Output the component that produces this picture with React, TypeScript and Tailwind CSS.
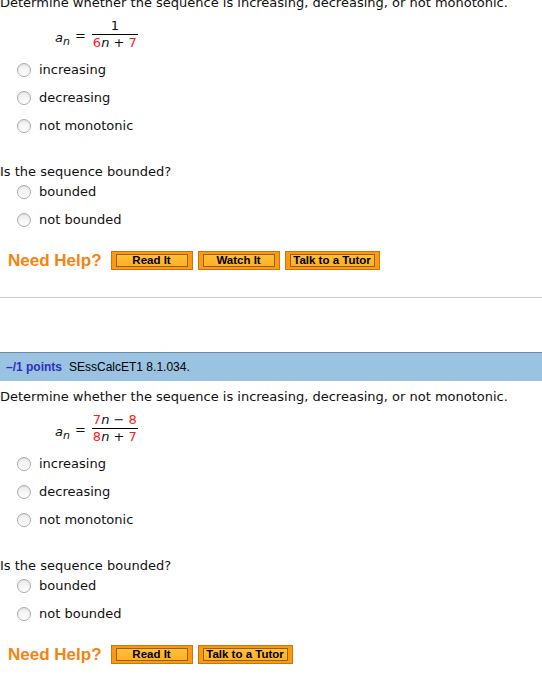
import React from 'react';

const verdana = '"DejaVu Sans", Verdana, sans-serif';
const arial = '"Liberation Sans", Arial, sans-serif';

function Radio({ label }: { label: string }) {
  return (
    <label className="flex h-[24px] items-center">
      <span className="ml-[17px] h-[14px] w-[14px] rounded-full border border-[#ababab] bg-gradient-to-b from-[#ececec] to-white shadow-[inset_0_1px_1px_rgba(0,0,0,0.06)]" />
      <span className="ml-[8px]">{label}</span>
    </label>
  );
}

function HelpButton({ label, width }: { label: string; width: string }) {
  return (
    <button
      className={`flex h-[19px] ${width} border border-[#c67614] bg-[#fc9a0c] px-[4px] py-[2px]`}
      style={{ fontFamily: arial }}
    >
      <span className="flex h-full flex-1 items-center justify-center border border-[#9a5e0c] bg-gradient-to-b from-[#ffc03a] to-[#ffb020] text-[11.5px] font-bold leading-none text-black">
        {label}
      </span>
    </button>
  );
}

function Question({
  num,
  den,
  tutorOnly,
}: {
  num: React.ReactNode;
  den: React.ReactNode;
  tutorOnly?: boolean;
}) {
  return (
    <div>
      <p className="h-[16px] leading-[16px]">
        Determine whether the sequence is increasing, decreasing, or not monotonic.
      </p>

      {/* formula */}
      <div className="my-[7px] flex h-[33px] items-center pl-[55px]">
        <span className="mt-[6px] italic">
          a<sub className="text-[11px] italic">n</sub>
        </span>
        <span className="ml-[5px] mr-[6px] mt-[2px]">=</span>
        <span className="inline-flex flex-col items-center">
          <span className="h-[16px] px-[1px] leading-[16px]">{num}</span>
          <span className="h-[17px] border-t border-black px-[1px] leading-[16px]">{den}</span>
        </span>
      </div>

      <div className="flex flex-col gap-[4px]">
        <Radio label="increasing" />
        <Radio label="decreasing" />
        <Radio label="not monotonic" />
      </div>

      <p className="mt-[26px] h-[16px] leading-[16px]">Is the sequence bounded?</p>
      <div className="flex flex-col gap-[4px]">
        <Radio label="bounded" />
        <Radio label="not bounded" />
      </div>

      <div className="mt-[19px] flex h-[19px] items-center">
        <span
          className="ml-[8px] mr-[9px] text-[17px] font-bold text-[#f7820f]"
          style={{ fontFamily: arial }}
        >
          Need Help?
        </span>
        <div className="flex gap-[5px]">
          <HelpButton label="Read It" width="w-[82px]" />
          {!tutorOnly && <HelpButton label="Watch It" width="w-[82px]" />}
          <HelpButton label="Talk to a Tutor" width="w-[95px]" />
        </div>
      </div>
    </div>
  );
}

const red = 'text-[#ff1a1a]';

export default function App() {
  return (
    <div
      className="h-[680px] w-full overflow-hidden bg-white text-[13px] text-[#111]"
      style={{ fontFamily: verdana }}
    >
      <div className="-mt-[5px]">
        <Question
          num={<span>1</span>}
          den={
            <span>
              <span className={red}>6</span>
              <i>n</i> + <span className={red}>7</span>
            </span>
          }
        />
      </div>

      <div className="mt-[27px] border-t border-[#cccccc]" />

      <div
        className="mt-[54px] flex h-[29px] items-center border-t border-[#6d8ca1] bg-[#9ac2e1] pl-[6px] text-[12px]"
        style={{ fontFamily: arial }}
      >
        <span className="font-bold text-[#3030c0]">–/1 points</span>
        <span className="ml-[7px] text-black">SEssCalcET1 8.1.034.</span>
      </div>

      <div className="mt-[8px]">
        <Question
          tutorOnly
          num={
            <span>
              <span className={red}>7</span>
              <i>n</i> − <span className={red}>8</span>
            </span>
          }
          den={
            <span>
              <span className={red}>8</span>
              <i>n</i> + <span className={red}>7</span>
            </span>
          }
        />
      </div>
    </div>
  );
}
